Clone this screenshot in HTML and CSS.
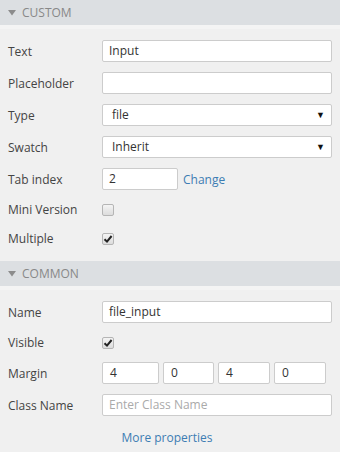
FILE: index.html
```html
<!DOCTYPE html>
<html lang="en">
<head>
    <meta charset="UTF-8">
    <title>Properties</title>
    <link rel="stylesheet" href="styles.css">
</head>
<body>
    <div class="panel">
        <div class="section-header">
            <svg class="caret" width="8" height="6" viewBox="0 0 8 6"><path d="M0 0 H8 L4 5.5 Z" fill="#8c8c8c"/></svg>
            CUSTOM
        </div>
        <div class="section">
            <div class="row">
                <span class="label">Text</span>
                <div class="field">Input</div>
            </div>
            <div class="row">
                <span class="label">Placeholder</span>
                <div class="field"></div>
            </div>
            <div class="row">
                <span class="label">Type</span>
                <div class="field select">file<span class="arrow">&#9660;</span></div>
            </div>
            <div class="row">
                <span class="label">Swatch</span>
                <div class="field select">Inherit<span class="arrow">&#9660;</span></div>
            </div>
            <div class="row">
                <span class="label">Tab index</span>
                <div class="inline">
                    <div class="field short">2</div>
                    <a class="link" href="#">Change</a>
                </div>
            </div>
            <div class="row check-row">
                <span class="label">Mini Version</span>
                <span class="checkbox"></span>
            </div>
            <div class="row check-row">
                <span class="label">Multiple</span>
                <span class="checkbox checked">
                    <svg width="10" height="10" viewBox="0 0 10 10"><path d="M1.5 5.2 L4 7.6 L8.6 2" fill="none" stroke="#222" stroke-width="2"/></svg>
                </span>
            </div>
        </div>

        <div class="section-header">
            <svg class="caret" width="8" height="6" viewBox="0 0 8 6"><path d="M0 0 H8 L4 5.5 Z" fill="#8c8c8c"/></svg>
            COMMON
        </div>
        <div class="section">
            <div class="row">
                <span class="label">Name</span>
                <div class="field">file_input</div>
            </div>
            <div class="row check-row">
                <span class="label">Visible</span>
                <span class="checkbox checked">
                    <svg width="10" height="10" viewBox="0 0 10 10"><path d="M1.5 5.2 L4 7.6 L8.6 2" fill="none" stroke="#222" stroke-width="2"/></svg>
                </span>
            </div>
            <div class="row">
                <span class="label">Margin</span>
                <div class="margins">
                    <div class="field">4</div>
                    <div class="field">0</div>
                    <div class="field">4</div>
                    <div class="field">0</div>
                </div>
            </div>
            <div class="row">
                <span class="label">Class Name</span>
                <div class="field placeholder">Enter Class Name</div>
            </div>
            <div class="more"><a class="link" href="#">More properties</a></div>
        </div>
    </div>
</body>
</html>
```

FILE: styles.css
```css
body {
    margin: 0;
    background: #f0f0f0;
    font-family: "Open Sans", Arial, sans-serif;
    font-size: 12px;
    color: #444;
}
.section-header {
    display: flex;
    align-items: center;
    gap: 6px;
    height: 25px;
    background: #dcdfe2;
    color: #888;
    padding-left: 8px;
    border-bottom: 4px solid #f4f4f4;
}
.section {
    padding: 6px 8px 8px 8px;
}
.row {
    display: grid;
    grid-template-columns: 94px 1fr;
    align-items: center;
    height: 32px;
}
.check-row {
    height: 29px;
}
.label {
    color: #444;
}
.field {
    height: 20px;
    line-height: 20px;
    background: #fff;
    border: 1px solid #ccc;
    border-radius: 2px;
    padding: 0 6px;
    color: #333;
}
.placeholder {
    color: #aaa;
}
.select {
    display: flex;
    justify-content: space-between;
    padding: 0 6px 0 9px;
}
.arrow {
    font-size: 9px;
    color: #111;
}
.inline {
    display: flex;
    align-items: center;
    gap: 5px;
}
.short {
    width: 62px;
}
.link {
    color: #3d7db3;
    text-decoration: none;
}
.checkbox {
    width: 10px;
    height: 10px;
    border: 1px solid #b5b5b5;
    border-radius: 2px;
    background: linear-gradient(#f4f4f4, #dcdcdc);
    display: flex;
    align-items: center;
    justify-content: center;
}
.margins {
    display: grid;
    grid-template-columns: 57px 51px 52px 52px;
    gap: 4px;
}
.margins .field {
    padding: 0 7px;
}
.more {
    text-align: center;
    padding-top: 8px;
    padding-right: 6px;
}
```
